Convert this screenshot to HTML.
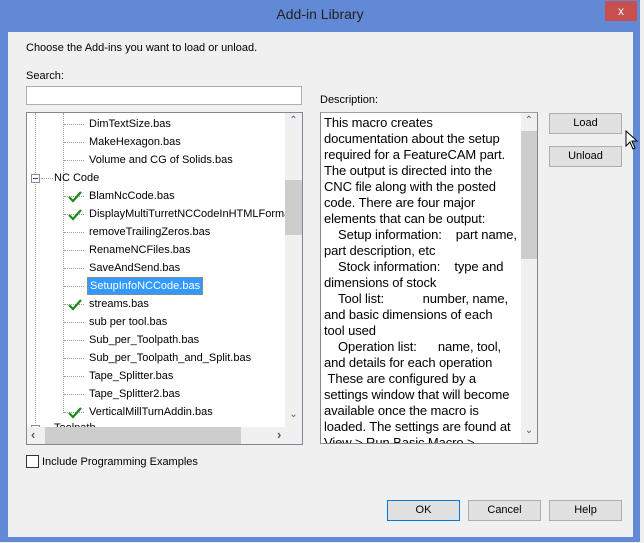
<!DOCTYPE html>
<html><head><style>
*{margin:0;padding:0;box-sizing:border-box}
body{width:644px;height:543px;background:#f0f0f0;position:relative;overflow:hidden;font-family:"Liberation Sans",Arial,sans-serif;font-size:11px;color:#000}
.a{position:absolute;white-space:nowrap}
.btn{position:absolute;width:73px;height:21px;background:#e1e1e1;border:1px solid #adadad;text-align:center;line-height:19px;font-size:11px}
.tr{position:absolute;left:0;height:18px;line-height:18px;font-size:11px}
.dl{position:absolute;left:3px;font-size:13px;line-height:16px;white-space:nowrap;color:#000;letter-spacing:-0.1px}
.dot{position:absolute;border-top:1px dotted #a0a0a0;width:20px}
.ck{position:absolute;width:14px;height:14px}
</style></head><body>
<div class="a" style="left:0;top:0;width:640px;height:542px;background:#6189d5"></div>
<div class="a" style="left:8px;top:32px;width:625px;height:505px;background:#f0f0f0"></div>
<div class="a" style="left:0;top:6px;width:640px;text-align:center;font-size:14px;color:#222">Add-in Library</div>
<div class="a" style="left:605px;top:1px;width:32px;height:20px;background:#c7504f;color:#fff;text-align:center;font-size:12px;line-height:20px">x</div>
<div class="a" style="left:26px;top:42px">Choose the Add-ins you want to load or unload.</div>
<div class="a" style="left:26px;top:70px">Search:</div>
<div class="a" style="left:26px;top:86px;width:276px;height:19px;background:#fff;border:1px solid #abadb3"></div>
<div class="a" style="left:320px;top:94px">Description:</div>

<svg width="0" height="0" style="position:absolute"><defs><symbol id="c" viewBox="0 0 14 14"><path d="M1 7 L5 11 L13 2" fill="none" stroke="#1a8a1a" stroke-width="2.2"/></symbol></defs></svg>

<div class="a" style="left:26px;top:112px;width:277px;height:333px;background:#fff;border:1px solid #828790;overflow:hidden">
 <div class="a" style="left:8px;top:0;height:310px;border-left:1px dotted #a0a0a0"></div>
 <div class="a" style="left:36px;top:0;height:300px;border-left:1px dotted #a0a0a0"></div>
 <div class="tr" style="top:2px;left:62px">DimTextSize.bas</div><div class="dot" style="left:37px;top:11px"></div>
 <div class="tr" style="top:20px;left:62px">MakeHexagon.bas</div><div class="dot" style="left:37px;top:29px"></div>
 <div class="tr" style="top:38px;left:62px">Volume and CG of Solids.bas</div><div class="dot" style="left:37px;top:47px"></div>
 <div class="a" style="left:4px;top:61px;width:9px;height:9px;border:1px solid #8c8c8c;background:#fff"><div class="a" style="left:1px;top:3px;width:5px;height:1px;background:#2050a0"></div></div>
 <div class="dot" style="left:14px;top:65px;width:12px"></div>
 <div class="tr" style="top:56px;left:27px">NC Code</div>
 <div class="dot" style="left:37px;top:83px"></div><svg class="ck" style="left:41px;top:77px"><use href="#c"/></svg><div class="tr" style="top:74px;left:62px">BlamNcCode.bas</div>
 <div class="dot" style="left:37px;top:101px"></div><svg class="ck" style="left:41px;top:95px"><use href="#c"/></svg><div class="tr" style="top:92px;left:62px">DisplayMultiTurretNCCodeInHTMLFormat.bas</div>
 <div class="dot" style="left:37px;top:119px"></div><div class="tr" style="top:110px;left:62px">removeTrailingZeros.bas</div>
 <div class="dot" style="left:37px;top:137px"></div><div class="tr" style="top:128px;left:62px">RenameNCFiles.bas</div>
 <div class="dot" style="left:37px;top:155px"></div><div class="tr" style="top:146px;left:62px">SaveAndSend.bas</div>
 <div class="dot" style="left:37px;top:173px"></div><div class="tr" style="top:164px;left:60px;background:#3399ff;color:#fff;padding:0 2px;border:1px dotted #c08040;line-height:16px">SetupInfoNCCode.bas</div>
 <div class="dot" style="left:37px;top:191px"></div><svg class="ck" style="left:41px;top:185px"><use href="#c"/></svg><div class="tr" style="top:182px;left:62px">streams.bas</div>
 <div class="dot" style="left:37px;top:209px"></div><div class="tr" style="top:200px;left:62px">sub per tool.bas</div>
 <div class="dot" style="left:37px;top:227px"></div><div class="tr" style="top:218px;left:62px">Sub_per_Toolpath.bas</div>
 <div class="dot" style="left:37px;top:245px"></div><div class="tr" style="top:236px;left:62px">Sub_per_Toolpath_and_Split.bas</div>
 <div class="dot" style="left:37px;top:263px"></div><div class="tr" style="top:254px;left:62px">Tape_Splitter.bas</div>
 <div class="dot" style="left:37px;top:281px"></div><div class="tr" style="top:272px;left:62px">Tape_Splitter2.bas</div>
 <div class="dot" style="left:37px;top:299px"></div><svg class="ck" style="left:41px;top:293px"><use href="#c"/></svg><div class="tr" style="top:290px;left:62px">VerticalMillTurnAddin.bas</div>
 <div class="a" style="left:4px;top:312px;width:9px;height:9px;border:1px solid #8c8c8c"></div>
 <div class="tr" style="top:306px;left:27px">Toolpath</div>
 <div class="a" style="left:258px;top:0;width:17px;height:314px;background:#f0f0f0"></div>
 <div class="a" style="left:258px;top:2px;width:17px;text-align:center;font-size:10px;color:#606060">&#8963;</div>
 <div class="a" style="left:258px;top:67px;width:17px;height:55px;background:#cdcdcd"></div>
 <div class="a" style="left:258px;top:296px;width:17px;text-align:center;font-size:10px;color:#606060">&#8964;</div>
 <div class="a" style="left:0;top:314px;width:275px;height:17px;background:#f0f0f0"></div>
 <div class="a" style="left:18px;top:314px;width:196px;height:17px;background:#cdcdcd"></div>
 <div class="a" style="left:4px;top:314px;font-size:13px;color:#606060;font-weight:bold">&lsaquo;</div>
 <div class="a" style="left:250px;top:314px;font-size:13px;color:#606060;font-weight:bold">&rsaquo;</div>
 <div class="a" style="left:258px;top:314px;width:17px;height:17px;background:#f0f0f0"></div>
</div>

<div class="a" style="left:320px;top:112px;width:218px;height:332px;background:#fff;border:1px solid #828790;border-top-color:#a0a0a0;overflow:hidden">
 <div class="dl" style="top:2px">This macro creates</div>
 <div class="dl" style="top:18px">documentation about the setup</div>
 <div class="dl" style="top:34px">required for a FeatureCAM part.</div>
 <div class="dl" style="top:50px">The output is directed into the</div>
 <div class="dl" style="top:66px">CNC file along with the posted</div>
 <div class="dl" style="top:82px">code. There are four major</div>
 <div class="dl" style="top:98px">elements that can be output:</div>
 <div class="dl" style="top:114px">&nbsp;&nbsp;&nbsp;&nbsp;Setup information:&nbsp;&nbsp;&nbsp; part name,</div>
 <div class="dl" style="top:130px">part description, etc</div>
 <div class="dl" style="top:146px">&nbsp;&nbsp;&nbsp;&nbsp;Stock information:&nbsp;&nbsp;&nbsp; type and</div>
 <div class="dl" style="top:162px">dimensions of stock</div>
 <div class="dl" style="top:178px">&nbsp;&nbsp;&nbsp;&nbsp;Tool list:&nbsp;&nbsp;&nbsp;&nbsp;&nbsp;&nbsp;&nbsp;&nbsp;&nbsp;&nbsp; number, name,</div>
 <div class="dl" style="top:194px">and basic dimensions of each</div>
 <div class="dl" style="top:210px">tool used</div>
 <div class="dl" style="top:226px">&nbsp;&nbsp;&nbsp;&nbsp;Operation list:&nbsp;&nbsp;&nbsp;&nbsp;&nbsp; name, tool,</div>
 <div class="dl" style="top:242px">and details for each operation</div>
 <div class="dl" style="top:258px">&nbsp;These are configured by a</div>
 <div class="dl" style="top:274px">settings window that will become</div>
 <div class="dl" style="top:290px">available once the macro is</div>
 <div class="dl" style="top:306px">loaded. The settings are found at</div>
 <div class="dl" style="top:322px">View &gt; Run Basic Macro &gt;</div>
 <div class="a" style="left:200px;top:0;width:16px;height:330px;background:#f0f0f0"></div>
 <div class="a" style="left:200px;top:2px;width:16px;text-align:center;font-size:10px;color:#606060">&#8963;</div>
 <div class="a" style="left:200px;top:18px;width:16px;height:128px;background:#cdcdcd"></div>
 <div class="a" style="left:200px;top:312px;width:16px;text-align:center;font-size:10px;color:#606060">&#8964;</div>
</div>

<div class="btn" style="left:549px;top:113px">Load</div>
<div class="btn" style="left:549px;top:146px">Unload</div>
<svg class="a" style="left:625px;top:130px" width="14" height="22"><path d="M1 1 L1 16 L5 12 L8 19 L10 18 L7 11 L12 11 Z" fill="#fff" stroke="#000" stroke-width="1"/></svg>
<div class="a" style="left:26px;top:455px;width:13px;height:13px;background:#fff;border:1px solid #333"></div>
<div class="a" style="left:42px;top:456px">Include Programming Examples</div>
<div class="btn" style="left:387px;top:500px;border-color:#0078d7">OK</div>
<div class="btn" style="left:468px;top:500px">Cancel</div>
<div class="btn" style="left:549px;top:500px">Help</div>
</body></html>
